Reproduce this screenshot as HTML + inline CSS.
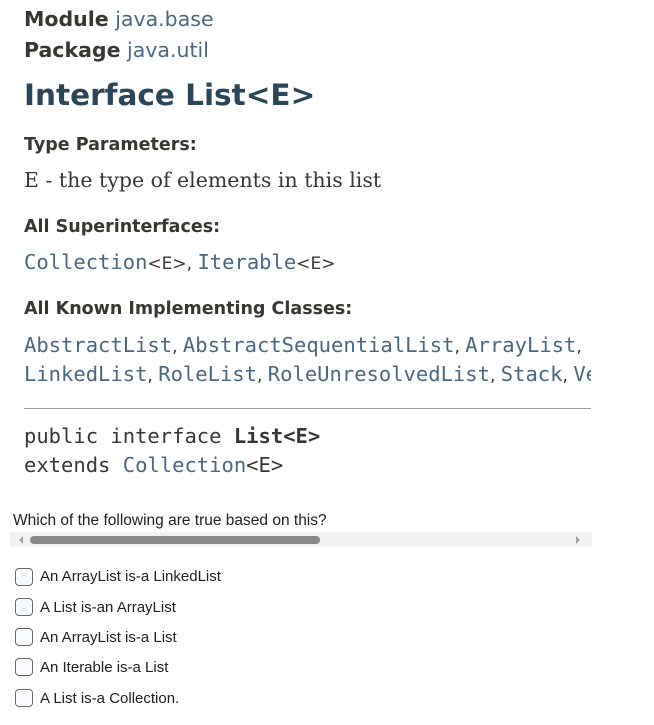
<!DOCTYPE html>
<html><head><style>
body{margin:0;width:654px;height:725px;background:#fff;position:relative;overflow:hidden;font-family:"DejaVu Sans",sans-serif;color:#353833}
.a{position:absolute;white-space:nowrap}
.l{color:#4a6782}
.m{font-family:"DejaVu Sans Mono",monospace;font-size:20.5px}
.h{font-weight:bold;font-size:17.5px;color:#353833}
.cb{position:absolute;left:15px;width:16px;height:16px;border:1.5px solid #6a6a6a;border-radius:4px;background:#f9fafe}
.q{position:absolute;left:40px;font-family:"Liberation Sans",sans-serif;font-size:15px;color:#202122;white-space:nowrap}
</style></head><body>
<div class="a" style="left:24px;top:7px;font-size:20.5px"><b>Module</b> <span class="l">java.base</span></div>
<div class="a" style="left:24px;top:38px;font-size:20.5px"><b>Package</b> <span class="l">java.util</span></div>
<div class="a" style="left:24px;top:78px;font-size:29.5px;font-weight:bold;color:#2c4557">Interface List&lt;E&gt;</div>
<div class="a h" style="top:135px;left:24px">Type Parameters:</div>
<div class="a" style="left:24px;top:168px;font-family:'DejaVu Serif',serif;font-size:20.5px">E - the type of elements in this list</div>
<div class="a h" style="top:217px;left:24px">All Superinterfaces:</div>
<div class="a" style="left:24px;top:250px;font-size:17px"><span class="m l">Collection</span>&lt;E&gt;, <span class="m l">Iterable</span>&lt;E&gt;</div>
<div class="a h" style="top:299px;left:24px">All Known Implementing Classes:</div>
<div class="a" style="left:24px;top:333px;font-size:17px;width:567px;overflow:hidden"><span class="m l">AbstractList</span>, <span class="m l">AbstractSequentialList</span>, <span class="m l">ArrayList</span>,</div>
<div class="a" style="left:24px;top:362px;font-size:17px;width:567px;overflow:hidden"><span class="m l">LinkedList</span>, <span class="m l">RoleList</span>, <span class="m l">RoleUnresolvedList</span>, <span class="m l">Stack</span>, <span class="m l">Vector</span></div>
<div class="a" style="left:24px;top:408px;width:567px;height:1px;background:#9a9a9a"></div>
<div class="a m" style="left:24px;top:424px">public interface <b>List&lt;E&gt;</b></div>
<div class="a m" style="left:24px;top:453px">extends <span class="l">Collection</span>&lt;E&gt;</div>
<div class="a" style="left:13px;top:512px;font-family:'Liberation Sans',sans-serif;font-size:15.5px;color:#202122">Which of the following are true based on this?</div>
<div class="a" style="left:10px;top:532px;width:582px;height:15px;background:#f1f1f1"></div>
<div class="a" style="left:30px;top:536px;width:290px;height:8px;border-radius:4px;background:#898989"></div>
<div class="a" style="left:19px;top:536px;width:0;height:0;border-top:4px solid transparent;border-bottom:4px solid transparent;border-right:4px solid #a3a3a3"></div>
<div class="a" style="left:576px;top:536px;width:0;height:0;border-top:4px solid transparent;border-bottom:4px solid transparent;border-left:4px solid #a3a3a3"></div>
<div class="cb" style="top:568px"></div><div class="q" style="top:568px">An ArrayList is-a LinkedList</div>
<div class="cb" style="top:598px"></div><div class="q" style="top:599px">A List is-an ArrayList</div>
<div class="cb" style="top:628px"></div><div class="q" style="top:629px">An ArrayList is-a List</div>
<div class="cb" style="top:658px"></div><div class="q" style="top:659px">An Iterable is-a List</div>
<div class="cb" style="top:689px"></div><div class="q" style="top:690px">A List is-a Collection.</div>
</body></html>
